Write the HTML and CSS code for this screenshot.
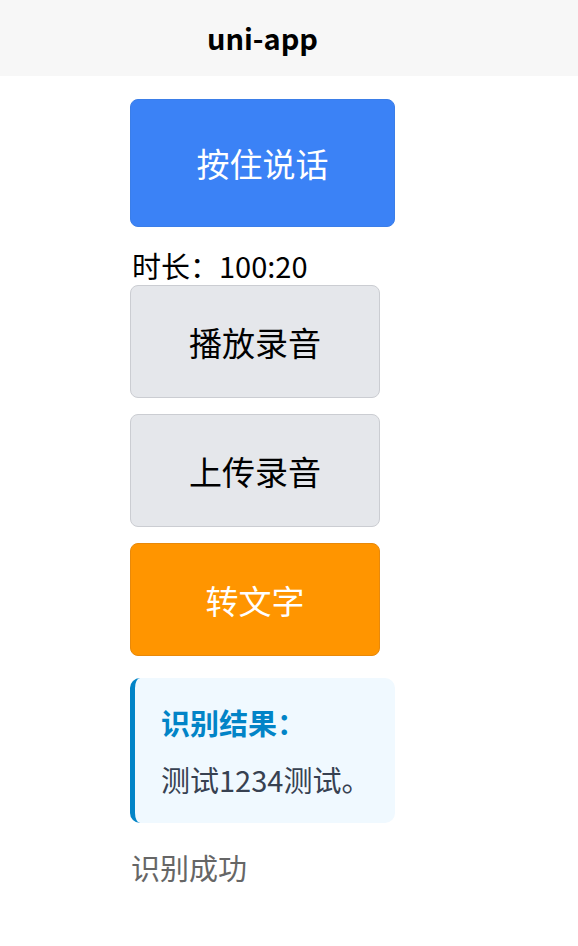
FILE: index.html
```html
<!DOCTYPE html>
<html lang="zh">
<head>
<meta charset="utf-8">
<title>uni-app</title>
<link rel="stylesheet" href="styles.css">
</head>
<body>
<header class="navbar">
  <div class="navbar-title">uni-app</div>
</header>
<main class="content">
  <button class="btn btn-primary">按住说话</button>
  <div class="duration">时长：100:20</div>
  <button class="btn btn-default">播放录音</button>
  <button class="btn btn-default">上传录音</button>
  <button class="btn btn-warn">转文字</button>
  <section class="result">
    <div class="result-title">识别结果：</div>
    <div class="result-text">测试1234测试。</div>
  </section>
  <div class="status">识别成功</div>
</main>
</body>
</html>
```
FILE: styles.css
```css
* { box-sizing: border-box; }
html, body {
  margin: 0;
  padding: 0;
  background: #ffffff;
  font-family: "Noto Sans CJK SC", "Noto Sans", sans-serif;
}
.navbar {
  height: 76px;
  background: #f7f7f7;
  display: flex;
  align-items: center;
  padding-left: 130px;
}
.navbar-title {
  width: 265px;
  text-align: center;
  font-size: 29px;
  font-weight: 700;
  color: #000;
  margin-top: -2px;
}
.content {
  width: 265px;
  margin-left: 130px;
  padding-top: 23px;
  display: flex;
  flex-direction: column;
  align-items: flex-start;
}
.btn {
  font-family: "Noto Sans CJK SC", "Noto Sans", sans-serif;
  font-size: 33px;
  border-radius: 8px;
  display: flex;
  align-items: center;
  justify-content: center;
  padding: 0;
  margin: 0;
}
.btn-primary {
  width: 265px;
  height: 128px;
  background: #3b82f6;
  border: 1px solid #3b7ee8;
  color: #fff;
}
.duration {
  font-size: 29px;
  line-height: 40px;
  margin-top: 18px;
  color: #000;
  padding-left: 2px;
}
.btn-default {
  width: 250px;
  height: 113px;
  background: #e5e7eb;
  border: 1px solid #cbcdd2;
  color: #000;
  margin-bottom: 16px;
}
.btn-warn {
  width: 250px;
  height: 113px;
  background: #ff9500;
  border: 1px solid #e8890a;
  color: #fff;
}
.result {
  margin-top: 22px;
  width: 265px;
  height: 145px;
  background: #f0f9ff;
  border-left: 5px solid #0284c7;
  border-radius: 10px;
  padding: 25px 0 0 26px;
}
.result-title {
  font-size: 29px;
  font-weight: 700;
  color: #0284c7;
  line-height: 38px;
}
.result-text {
  font-size: 29px;
  color: #374151;
  line-height: 38px;
  margin-top: 19px;
}
.status {
  margin-top: 24px;
  font-size: 29px;
  line-height: 40px;
  color: #666;
  padding-left: 1px;
}
```
